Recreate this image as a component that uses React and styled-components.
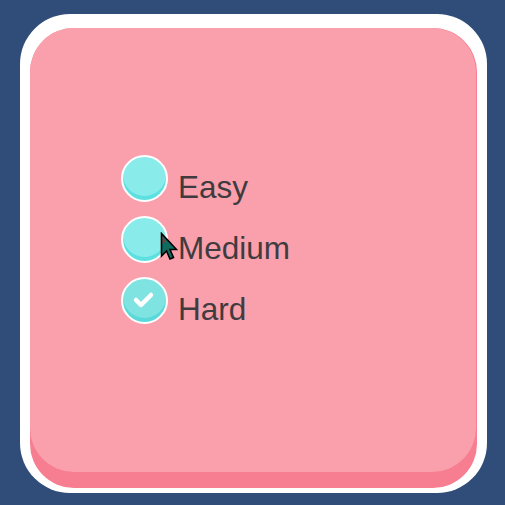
import React, { useState } from "react"
import styled, { createGlobalStyle } from "styled-components"

const GlobalStyle = createGlobalStyle`
    html, body {
        margin: 0;
        padding: 0;
        background: #304d7a;
    }
    * {
        box-sizing: border-box;
    }
`

const Page = styled.div`
    position: relative;
    width: 505px;
    height: 505px;
    padding: 14px 18px 12px 20px;
    display: flex;
    font-family: "Liberation Sans", Arial, sans-serif;
`

const Card = styled.div`
    flex: 1;
    display: flex;
    background: #ffffff;
    border-radius: 50px;
    padding: 14px 10px 5px 10px;
`

const Board = styled.div`
    flex: 1;
    display: flex;
    flex-direction: column;
    background: #f77d90;
    border-radius: 44px;
`

const Face = styled.div`
    flex: 1;
    margin: 0 1px 16px 0;
    background: #f9a0ac;
    border-radius: 44px;
    padding: 127px 0 0 91px;
`

const OptionList = styled.div`
    display: flex;
    flex-direction: column;
    gap: 14px;
`

const OptionRow = styled.label`
    display: flex;
    align-items: flex-start;
    gap: 10px;
    height: 47px;
    cursor: pointer;
`

const Radio = styled.span`
    flex: none;
    width: 47px;
    height: 47px;
    border-radius: 50%;
    border: 2px solid #ffffff;
    background: ${p => (p.$checked ? "#7fe3e1" : "#89ecea")};
    box-shadow: inset 0 -4px 0 ${p => (p.$checked ? "#5bd9da" : "#5ee0e1")};
    display: flex;
`

const Label = styled.span`
    margin-top: 15px;
    font-size: 31.5px;
    line-height: 34px;
    color: #403b3e;
`

const Cursor = styled.svg`
    position: absolute;
    left: 160px;
    top: 232px;
    pointer-events: none;
`

const Check = () => (
    <svg width="43" height="43" viewBox="2 2 43 43">
        <path d="M15 23 L20 28 L30 18" fill="none" stroke="#ffffff" strokeWidth="4.5" strokeLinecap="round" strokeLinejoin="round" />
    </svg>
)

const options = ["Easy", "Medium", "Hard"]

export default function App() {
    const [level, setLevel] = useState("Hard")

    return (
        <Page>
            <GlobalStyle />
            <Card>
                <Board>
                    <Face>
                        <OptionList role="radiogroup">
                            {options.map(name => (
                                <OptionRow key={name} role="radio" aria-checked={level === name} onClick={() => setLevel(name)}>
                                    <Radio $checked={level === name}>
                                        {level === name && <Check />}
                                    </Radio>
                                    <Label>{name}</Label>
                                </OptionRow>
                            ))}
                        </OptionList>
                    </Face>
                </Board>
            </Card>
            <Cursor width="18" height="30" viewBox="0 0 18 30">
                <path d="M1.5 1.5 L1.5 24 L6.5 19 L10 27 L13.5 25.5 L10 17.5 L16.5 17.5 Z" fill="#0f6b5e" stroke="#000000" strokeWidth="1.6" strokeLinejoin="miter" />
                <path d="M2.6 4 L2.6 12 L5 9.5 Z" fill="#b0202a" />
            </Cursor>
        </Page>
    )
}
